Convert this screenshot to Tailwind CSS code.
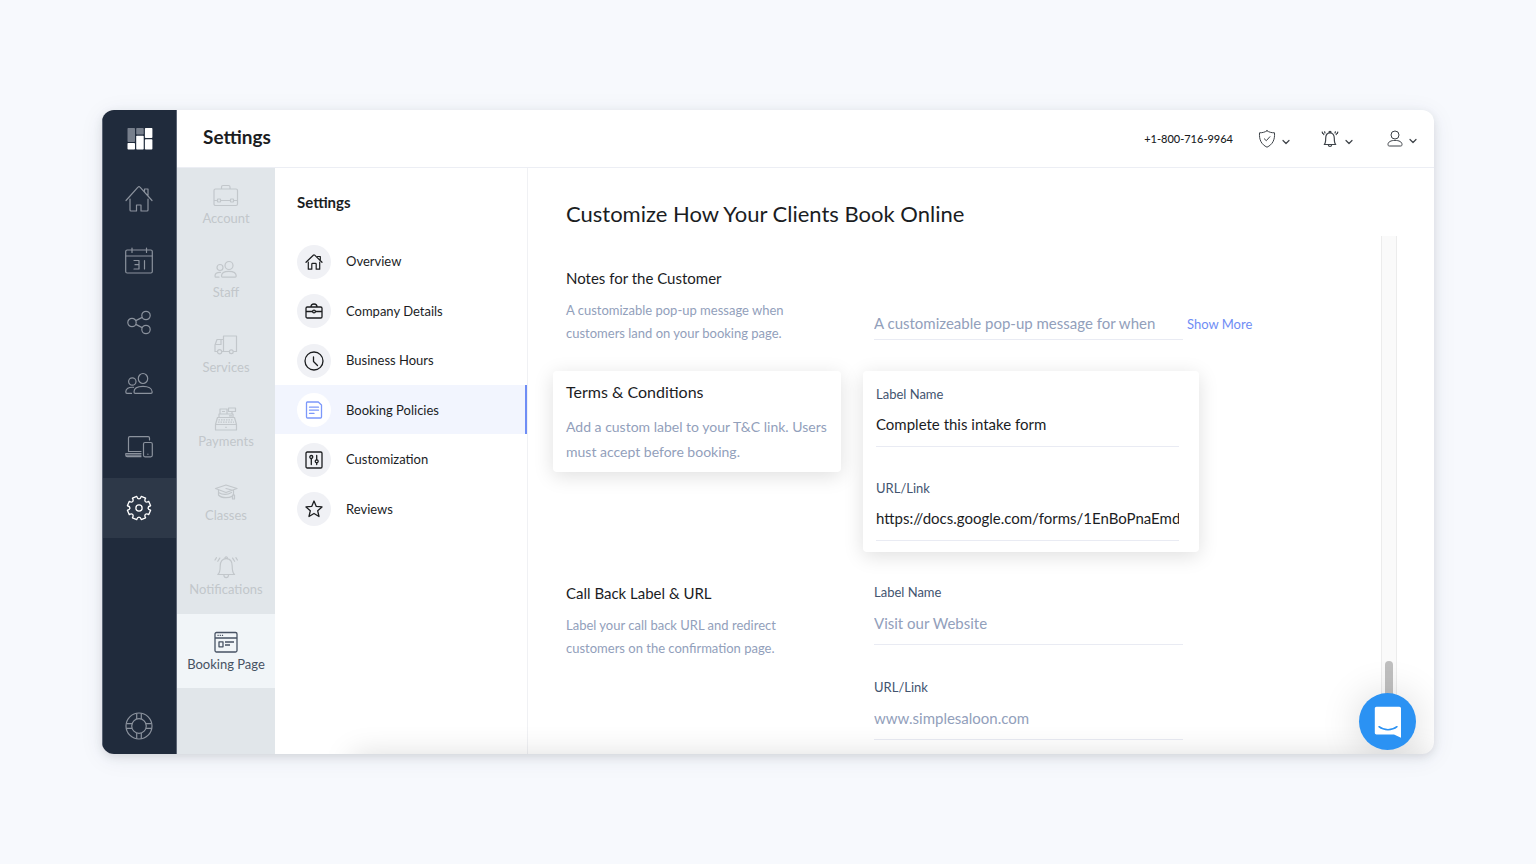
<!DOCTYPE html>
<html lang="en">
<head>
    <meta charset="UTF-8">
    <meta name="viewport" content="width=device-width, initial-scale=1.0">
    <title>Settings - Booking Policies</title>
    <!-- Tailwind CSS CDN -->
    <script src="https://cdn.jsdelivr.net/npm/@tailwindcss/browser@4"></script>
</head>
<body class="bg-[#f7f9fd] font-[Lato,sans-serif] text-[#1b1d1f]">
    <div class="flex h-screen px-[102px] py-[110px]">
        <div class="relative flex flex-1 overflow-hidden rounded-xl bg-white shadow-[0_3px_10px_rgba(0,0,0,0.10),0_4px_24px_rgba(40,50,90,0.08)]">

            <!-- Main navigation -->
            <nav aria-label="Main" class="flex w-[75px] shrink-0 flex-col border-x border-[#5b6474] bg-[#202b3c] text-[#8b929d]">
                <a href="#" aria-label="Dashboard" class="flex h-[58px] items-center justify-center">
                    <svg class="size-[26px]" viewBox="0 0 26 26" fill="#fff">
                        <rect x="0.500" y="2" width="7.500" height="14" rx="0.800" fill="#777f8c"/>
                        <rect x="0.500" y="17" width="7.500" height="6.500" rx="0.800"/>
                        <rect x="9.200" y="2" width="7.500" height="6.500" rx="0.800" fill="#777f8c"/>
                        <rect x="9.200" y="9.800" width="7.500" height="13.700" rx="0.800"/>
                        <rect x="17.900" y="2" width="7.500" height="10" rx="0.800"/>
                        <rect x="17.900" y="13.200" width="7.500" height="10.300" rx="0.800"/>
                    </svg>
                </a>
                <div class="flex flex-col gap-0.5">
                    <a href="#" aria-label="Home" class="flex h-[60px] items-center justify-center pr-px">
                        <svg class="size-7" viewBox="0 0 28 28" fill="none" stroke="currentColor" stroke-width="1.200" stroke-linecap="round" stroke-linejoin="round">
                            <path d="M1 16.500 13 3.200c.6-.7 1.400-.7 2 0L27 16.500M19.500 8V5h3.500v7M5 15v11c0 .6.400 1 1 1h5.500v-6h4.500v6h6c.6 0 1-.4 1-1V15"/>
                        </svg>
                    </a>
                    <a href="#" aria-label="Calendar" class="flex h-[60px] items-center justify-center pr-px">
                        <svg class="size-7" viewBox="0 0 28 28" fill="none" stroke="currentColor" stroke-width="1.200" stroke-linecap="round" stroke-linejoin="round">
                            <rect x="0.700" y="4" width="26.600" height="23" rx="1.500"/>
                            <path d="M1 10h26M7 2v4.500M21.500 2v4.500M9 14.500h5V23H9M10 18.700h4M19.500 14.500V23"/>
                        </svg>
                    </a>
                    <a href="#" aria-label="Share" class="flex h-[60px] items-center justify-center pr-px">
                        <svg class="size-7" viewBox="0 0 28 28" fill="none" stroke="currentColor" stroke-width="1.200">
                            <circle cx="7" cy="14.500" r="4.200"/>
                            <circle cx="21" cy="7.500" r="4.200"/>
                            <circle cx="21" cy="21.500" r="4.200"/>
                            <path d="m10.800 12.600 6.400-3.200M10.800 16.400l6.400 3.200"/>
                        </svg>
                    </a>
                    <a href="#" aria-label="Clients" class="flex h-[60px] items-center justify-center pr-px">
                        <svg class="size-7" viewBox="0 0 28 28" fill="none" stroke="currentColor" stroke-width="1.200" stroke-linecap="round" stroke-linejoin="round">
                            <ellipse cx="18" cy="8.500" rx="4.700" ry="5"/>
                            <circle cx="7.300" cy="11.500" r="3.700"/>
                            <path d="M9 22c0-3.800 4-5.700 9-5.700s9.200 1.900 9.200 5.700c0 .9-.4 1.400-1.200 1.400H10.200C9.400 23.400 9 22.900 9 22ZM8.500 17.300C3.500 17 .8 18.800.8 21.800c0 1 .3 1.600 1.200 1.600h4.500"/>
                        </svg>
                    </a>
                    <a href="#" aria-label="Devices" class="flex h-[60px] items-center justify-center pr-px">
                        <svg class="size-7" viewBox="0 0 28 28" fill="none" stroke="currentColor" stroke-width="1.200" stroke-linecap="round" stroke-linejoin="round">
                            <path d="M16 19.500H3.500V6c0-.8.500-1.300 1.300-1.300h18.400c.8 0 1.300.5 1.300 1.300v2M16 21.500H.8v1.800c0 .9.500 1.400 1.400 1.400H16M2 23.100h14"/>
                            <rect x="18.500" y="10.500" width="8.800" height="14.300" rx="1.500"/>
                            <path d="M22.900 22v.3"/>
                        </svg>
                    </a>
                    <a href="#" aria-label="Settings" aria-current="page" class="flex h-[60px] items-center justify-center bg-[#2d3848] pr-px text-white">
                        <svg class="size-7" viewBox="0 0 28 28" fill="none" stroke="currentColor" stroke-width="1.300" stroke-linejoin="round">
                            <path d="M16.250 2.400 20.600 4.200C18.800 7.200 20.800 9.200 23.800 7.400L25.600 11.750C22.200 12.600 22.200 15.400 25.600 16.250L23.800 20.600C20.800 18.800 18.800 20.800 20.600 23.800L16.250 25.600C15.400 22.200 12.600 22.200 11.750 25.600L7.400 23.800C9.200 20.800 7.200 18.800 4.200 20.600L2.400 16.250C5.800 15.400 5.800 12.600 2.400 11.750L4.200 7.400C7.200 9.200 9.200 7.200 7.400 4.200L11.750 2.400C12.600 5.800 15.400 5.800 16.250 2.400Z"/>
                            <circle cx="14" cy="14" r="3.100"/>
                        </svg>
                    </a>
                </div>
                <a href="#" aria-label="Help" class="mt-auto flex h-14 items-center justify-center pr-0.5">
                    <svg class="size-7" viewBox="0 0 28 28" fill="none" stroke="currentColor" stroke-width="1.200">
                        <circle cx="14" cy="14" r="13"/>
                        <circle cx="14" cy="14" r="7.300"/>
                        <path d="M11.700 1.200V7M16.300 1.200V7M11.700 21v5.800M16.300 21v5.800M1.200 11.700H7M1.200 16.300H7M21 11.700h5.800M21 16.300h5.800"/>
                    </svg>
                </a>
            </nav>

            <div class="flex min-w-0 flex-1 flex-col">
                <!-- Top bar -->
                <header class="flex h-[58px] shrink-0 items-center border-b border-[#eceef4] pr-[17px] pl-[26px]">
                    <h1 class="pb-0.5 text-[19px] font-bold">Settings</h1>
                    <div class="ml-auto flex items-center">
                        <a href="tel:+18007169964" class="pt-px text-[11px] font-medium">+1-800-716-9964</a>
                        <button type="button" aria-label="Security" class="ml-6 flex items-center gap-[5px] text-[#3d4248]">
                            <svg class="size-5" viewBox="0 0 20 20" fill="none" stroke="currentColor" stroke-linecap="round" stroke-linejoin="round">
                                <path d="M10 1.800c2 1.400 4.500 2 7.500 2C18 11 15.500 15.500 10 18.200 4.500 15.500 2 11 2.500 3.800c3 0 5.500-.6 7.500-2Z"/>
                                <path d="m7.300 9.800 2 1.900 3.600-4"/>
                            </svg>
                            <svg class="mt-1.5 size-2" viewBox="0 0 8 8" fill="none" stroke="currentColor" stroke-width="1.200" stroke-linecap="round" stroke-linejoin="round"><path d="m1 2.500 3 3 3-3"/></svg>
                        </button>
                        <button type="button" aria-label="Alerts" class="ml-[30px] flex items-center gap-[5px] text-[#3d4248]">
                            <svg class="size-5" viewBox="0 0 20 20" fill="none" stroke="currentColor" stroke-width="1.200" stroke-linecap="round" stroke-linejoin="round">
                                <path d="M4.300 15.500c1.200-1 1.400-2 1.400-6.200 0-3.300 1.600-5.500 4.300-5.500s4.300 2.200 4.300 5.500c0 4.200.2 5.200 1.400 6.200ZM9 3.700c-.3-1.900 2.300-1.900 2 0M8.300 15.700c.2 2.300 3.200 2.300 3.400 0M2.200 3l.5 1.500M4.600 2.800 5 4M17.800 3l-.5 1.500M15.400 2.800 15 4M3.600 4.800l.2.900M16.400 4.800l-.2.900"/>
                            </svg>
                            <svg class="mt-1.5 size-2" viewBox="0 0 8 8" fill="none" stroke="currentColor" stroke-width="1.200" stroke-linecap="round" stroke-linejoin="round"><path d="m1 2.500 3 3 3-3"/></svg>
                        </button>
                        <button type="button" aria-label="Profile" class="ml-8 flex items-center gap-1 text-[#3d4248]">
                            <svg class="size-5" viewBox="0 0 20 20" fill="none" stroke="currentColor" stroke-linejoin="round">
                                <circle cx="10" cy="6" r="4"/>
                                <path d="M3 15.500c0-2.700 3-4.100 7-4.100s7 1.400 7 4.100c0 1-.4 1.500-1.300 1.500H4.300C3.400 17 3 16.500 3 15.500Z"/>
                            </svg>
                            <svg class="mt-1 size-2" viewBox="0 0 8 8" fill="none" stroke="currentColor" stroke-width="1.200" stroke-linecap="round" stroke-linejoin="round"><path d="m1 2.500 3 3 3-3"/></svg>
                        </button>
                    </div>
                </header>

                <div class="flex min-h-0 flex-1">
                    <!-- Settings categories -->
                    <nav aria-label="Categories" class="w-[98px] shrink-0 bg-[#e1e6ea] text-[13px] leading-4 text-[#c2c7cb]">
                        <div class="grid h-[520px] grid-rows-7">
                            <a href="#" class="flex flex-col items-center pt-3.5">
                                <svg class="size-7" viewBox="0 0 28 28" fill="none" stroke="currentColor" stroke-width="1.200" stroke-linejoin="round">
                                    <rect x="2" y="7" width="23.500" height="16.500" rx="1.500"/>
                                    <path d="M9.500 7V5c0-1 .5-1.500 1.500-1.500h5.500c1 0 1.500.5 1.500 1.500v2M2 18.500h3.500M8.500 18.500h10M21.500 18.500h4"/>
                                    <rect x="5.500" y="17" width="3" height="3" rx="0.500"/>
                                    <rect x="18.500" y="17" width="3" height="3" rx="0.500"/>
                                </svg>
                                <span>Account</span>
                            </a>
                            <a href="#" class="flex flex-col items-center pt-3.5">
                                <svg class="size-7" viewBox="0 0 28 28" fill="none" stroke="currentColor" stroke-width="1.200" stroke-linecap="round" stroke-linejoin="round">
                                    <circle cx="17" cy="9.500" r="4"/>
                                    <circle cx="8" cy="11.500" r="3"/>
                                    <path d="M9.500 20c0-3 3.200-4.700 7.300-4.700s7.400 1.700 7.400 4.700c0 .8-.4 1.200-1 1.200H10.500c-.6 0-1-.4-1-1.200ZM8.500 16.400c-4-.1-5.500 1.300-5.500 3.500 0 .8.300 1.300 1 1.300h3"/>
                                </svg>
                                <span>Staff</span>
                            </a>
                            <a href="#" class="flex flex-col items-center pt-3.5">
                                <svg class="size-7" viewBox="0 0 28 28" fill="none" stroke="currentColor" stroke-width="1.200" stroke-linejoin="round">
                                    <path d="M11.500 20.500V5h13v15.500h-3.200M17.500 20.500H9.700M5.500 20.500H3V14l2-5.500h6.500M3 13.500h6v-5"/>
                                    <circle cx="7.600" cy="20.800" r="2.100"/>
                                    <circle cx="19.300" cy="20.800" r="1.900"/>
                                </svg>
                                <span>Services</span>
                            </a>
                            <a href="#" class="flex flex-col items-center pt-3.5">
                                <svg class="size-7" viewBox="0 0 28 28" fill="none" stroke="currentColor" stroke-width="1.200" stroke-linejoin="round">
                                    <path d="M5.500 12.500h17l2 7H3.500ZM3.500 19.500h21v5.500h-21ZM7 12.500V9h14v3.500M8 9V4h7v5M16.500 3h7v3.500h-7ZM20 6.500V9"/>
                                    <path d="M6.500 14.800h15M6 17.200h16" stroke-dasharray="1.500 1"/>
                                    <path d="M10 6.500h3M17 10.800h3M13.300 22.300h1.400"/>
                                </svg>
                                <span>Payments</span>
                            </a>
                            <a href="#" class="flex flex-col items-center pt-3.5">
                                <svg class="size-7" viewBox="0 0 28 28" fill="none" stroke="currentColor" stroke-width="1.200" stroke-linecap="round" stroke-linejoin="round">
                                    <path d="M3.500 9.500 14 6l11 3.500-11 4ZM6.500 11v5c1.500 1.800 4 2.700 7.500 2.700 2.400 0 4.500-.5 6-1.300M6.500 13.500c4 2.400 9 2.400 13 0M14 9.500l7.500 2v4.500"/>
                                    <path d="M20.500 16h2v4h-2Z"/>
                                </svg>
                                <span>Classes</span>
                            </a>
                            <a href="#" class="flex flex-col items-center pt-3.5">
                                <svg class="size-7" viewBox="0 0 28 28" fill="none" stroke="currentColor" stroke-width="1.200" stroke-linecap="round" stroke-linejoin="round">
                                    <path d="M5.800 21.500c2-1.300 2.400-3 2.400-8.500 0-4.500 2.200-7.300 6-7.300s6 2.800 6 7.300c0 5.500.4 7.200 2.400 8.500ZM12.900 5.700c-.3-2.500 2.900-2.500 2.600 0M11.800 21.700c.3 4 4.500 4 4.800 0M3 7l1.500-2.300M5.800 8.300l2-3.200M25.400 7l-1.500-2.300M22.600 8.300l-2-3.200"/>
                                </svg>
                                <span>Notifications</span>
                            </a>
                            <a href="#" aria-current="page" class="flex flex-col items-center bg-[#f1f5f8] pt-3.5 text-[#475263]">
                                <svg class="size-7" viewBox="0 0 28 28" fill="none" stroke="currentColor" stroke-width="1.300" stroke-linejoin="round">
                                    <rect x="3" y="4.500" width="22" height="19.500" rx="1.500"/>
                                    <path d="M3 10h22M13 14h9M13 17h5"/>
                                    <path d="M5.500 7.300h6" stroke-dasharray="1.200 1"/>
                                    <rect x="7" y="13.800" width="4" height="5"/>
                                </svg>
                                <span>Booking Page</span>
                            </a>
                        </div>
                    </nav>

                    <!-- Booking page sections -->
                    <nav aria-label="Booking page" class="w-[253px] shrink-0 border-r border-[#f0f1f4]">
                        <h2 class="pt-6 pl-[22px] text-[15px] leading-5 font-bold">Settings</h2>
                        <div class="mt-6 grid h-[297px] grid-rows-6 text-[13px]">
                            <a href="#" class="flex items-center gap-[15px] pt-0.5 pl-[22px]">
                                <span class="flex size-[34px] items-center justify-center rounded-full bg-[#f0f1f5]">
                                    <svg class="size-5" viewBox="0 0 20 20" fill="none" stroke="currentColor" stroke-width="1.200" stroke-linecap="round" stroke-linejoin="round">
                                        <path d="m2 10.300 7.300-7.100c.4-.4 1-.4 1.400 0l7.300 7.100M13.500 4.500h2.800v3M4.300 10v7.200h3.500v-5c0-.5.300-.8.800-.8h2.800c.5 0 .8.300.8.800v5h3.500V10"/>
                                    </svg>
                                </span>
                                Overview
                            </a>
                            <a href="#" class="flex items-center gap-[15px] pt-0.5 pl-[22px]">
                                <span class="flex size-[34px] items-center justify-center rounded-full bg-[#f0f1f5]">
                                    <svg class="size-5" viewBox="0 0 20 20" fill="none" stroke="currentColor" stroke-width="1.300" stroke-linejoin="round">
                                        <rect x="2" y="6" width="16" height="11" rx="1.300"/>
                                        <path d="M7 6c0-2 1-3 3-3s3 1 3 3M2 10.500h6.500M11.500 10.500H18"/>
                                        <circle cx="10" cy="10.500" r="1.400"/>
                                    </svg>
                                </span>
                                Company Details
                            </a>
                            <a href="#" class="flex items-center gap-[15px] pt-0.5 pl-[22px]">
                                <span class="flex size-[34px] items-center justify-center rounded-full bg-[#f0f1f5]">
                                    <svg class="size-5" viewBox="0 0 20 20" fill="none" stroke="currentColor" stroke-width="1.300" stroke-linecap="round" stroke-linejoin="round">
                                        <circle cx="10" cy="10" r="9"/>
                                        <path d="M9.500 6v4.500l4 4"/>
                                    </svg>
                                </span>
                                Business Hours
                            </a>
                            <a href="#" aria-current="page" class="flex items-center gap-[15px] border-r-2 border-[#6f8df5] bg-[#f2f5fe] pt-0.5 pl-[22px]">
                                <span class="flex size-[34px] items-center justify-center rounded-full bg-white text-[#7c98fa]">
                                    <svg class="size-5" viewBox="0 0 20 20" fill="none" stroke="currentColor" stroke-width="1.300" stroke-linecap="round" stroke-linejoin="round">
                                        <path d="M3.300 2h11L17.500 5v12c0 .6-.4 1-1 1H3.500c-.6 0-1-.4-1-1V3c0-.6.300-1 .8-1Z"/>
                                        <path d="M5.500 7.200h9M5.500 10.200h9M5.500 13.400h4.500"/>
                                    </svg>
                                </span>
                                Booking Policies
                            </a>
                            <a href="#" class="flex items-center gap-[15px] pt-0.5 pl-[22px]">
                                <span class="flex size-[34px] items-center justify-center rounded-full bg-[#f0f1f5]">
                                    <svg class="size-5" viewBox="0 0 20 20" fill="none" stroke="currentColor" stroke-width="1.300" stroke-linecap="round" stroke-linejoin="round">
                                        <rect x="2" y="2" width="16" height="16" rx="1.200"/>
                                        <circle cx="7.300" cy="7" r="1.500"/>
                                        <circle cx="12.700" cy="11.300" r="1.500"/>
                                        <path d="M7.300 8.500v6M12.700 5.500v4.300M12.700 12.800v1.700"/>
                                    </svg>
                                </span>
                                Customization
                            </a>
                            <a href="#" class="flex items-center gap-[15px] pt-0.5 pl-[22px]">
                                <span class="flex size-[34px] items-center justify-center rounded-full bg-[#f0f1f5]">
                                    <svg class="size-5" viewBox="0 0 20 20" fill="none" stroke="currentColor" stroke-width="1.300" stroke-linejoin="round">
                                        <path d="m10 2 2.300 5.400 5.700.5-4.300 3.900 1.300 5.700-5-3-5 3 1.300-5.700L2 7.900l5.700-.5Z"/>
                                    </svg>
                                </span>
                                Reviews
                            </a>
                        </div>
                    </nav>

                    <!-- Booking policies form -->
                    <main class="flex min-w-0 flex-1 flex-col overflow-hidden pr-[37px] pl-[25px]">
                        <h2 class="pt-8 pl-[13px] text-[22px] leading-7">Customize How Your Clients Book Online</h2>
                        <div class="mt-2 flex min-h-0 flex-1">
                            <form class="min-w-0 flex-1">
                                <section class="grid grid-cols-[288px_336px_1fr] items-start gap-x-[22px] pt-[30px]">
                                    <div class="pl-[13px]">
                                        <h3 class="text-[15px] leading-6">Notes for the Customer</h3>
                                        <p class="mt-[9px] w-[240px] text-[13px] leading-[23px] text-[#92a0bb]">A customizable pop-up message when customers land on your booking page.</p>
                                    </div>
                                    <div class="col-span-2 flex items-center pt-10 pl-[11px]">
                                        <input type="text" aria-label="Notes for the Customer" placeholder="A customizeable pop-up message for when" class="h-[34px] w-[309px] border-b border-[#e9ebf3] text-[15px] outline-none placeholder:text-[#92a0bb]">
                                        <button type="button" class="ml-1 pt-1 text-[13px] text-[#6f8df5]">Show More</button>
                                    </div>
                                </section>

                                <section class="mt-[26px] grid grid-cols-[288px_336px] items-start gap-x-[22px]">
                                    <div class="rounded-sm bg-white px-[13px] pt-[9px] pb-2 shadow-[0_4px_20px_rgba(0,0,0,0.13)]">
                                        <h3 class="text-[16px] leading-6">Terms &amp; Conditions</h3>
                                        <p class="mt-2.5 text-[14px] leading-[25px] text-[#92a0bb]">Add a custom label to your T&amp;C link. Users must accept before booking.</p>
                                    </div>
                                    <div class="rounded-sm bg-white pt-3.5 pr-5 pb-[11px] pl-[13px] shadow-[0_4px_20px_rgba(0,0,0,0.13)]">
                                        <label for="terms-label" class="block text-[13px] leading-[18px] text-[#43546f]">Label Name</label>
                                        <input id="terms-label" type="text" value="Complete this intake form" class="h-11 w-full border-b border-[#e9ebf3] pb-0.5 text-[15px] outline-none">
                                        <label for="terms-url" class="mt-8 block text-[13px] leading-[18px] text-[#43546f]">URL/Link</label>
                                        <input id="terms-url" type="text" value="https://docs.google.com/forms/1EnBoPnaEmds" class="h-11 w-full border-b border-[#e9ebf3] pb-0.5 text-[15px] outline-none">
                                    </div>
                                </section>

                                <section class="mt-[29px] grid grid-cols-[288px_336px] items-start gap-x-[22px]">
                                    <div class="pl-[13px]">
                                        <h3 class="text-[15px] leading-6">Call Back Label &amp; URL</h3>
                                        <p class="mt-[9px] w-[240px] text-[13px] leading-[23px] text-[#92a0bb]">Label your call back URL and redirect customers on the confirmation page.</p>
                                    </div>
                                    <div class="pt-0.5 pr-4 pl-[11px]">
                                        <label for="callback-label" class="block text-[13px] leading-[18px] text-[#43546f]">Label Name</label>
                                        <input id="callback-label" type="text" placeholder="Visit our Website" class="h-11 w-full border-b border-[#e9ebf3] text-[15px] outline-none placeholder:text-[#92a0bb]">
                                        <label for="callback-url" class="mt-[33px] block text-[13px] leading-[18px] text-[#43546f]">URL/Link</label>
                                        <input id="callback-url" type="text" placeholder="www.simplesaloon.com" class="h-11 w-full border-b border-[#e9ebf3] text-[15px] outline-none placeholder:text-[#92a0bb]">
                                    </div>
                                </section>
                            </form>
                            <!-- Scroll track -->
                            <div class="mb-6 flex w-4 shrink-0 justify-center border-x border-[#ececec] bg-[#fafafa] pt-[425px]">
                                <div class="w-2 rounded-full bg-[#bfbfbf]"></div>
                            </div>
                        </div>
                    </main>
                </div>
            </div>

            <!-- Fade along the bottom edge -->
            <div class="pointer-events-none absolute top-full right-0 left-[250px] h-10 shadow-[0_0_30px_rgba(0,0,0,0.13)]"></div>

            <!-- Chat launcher -->
            <button type="button" aria-label="Open chat" class="absolute right-[18px] bottom-1 flex size-[57px] items-center justify-center rounded-full bg-[#2b92f3] shadow-[0_2px_40px_rgba(0,0,0,0.16)]">
                <svg class="size-8" viewBox="0 0 32 32">
                    <path d="M4.500.8h22.800c1 0 1.700.7 1.700 1.700v29.300l-7-3.300H4.500c-1 0-1.700-.7-1.700-1.700V2.500c0-1 .7-1.700 1.700-1.700Z" fill="#fff"/>
                    <path d="M7 20.700c5 4 13 4 18 0" fill="none" stroke="#2b92f3" stroke-width="1.500" stroke-linecap="round"/>
                </svg>
            </button>
        </div>
    </div>
</body>
</html>
